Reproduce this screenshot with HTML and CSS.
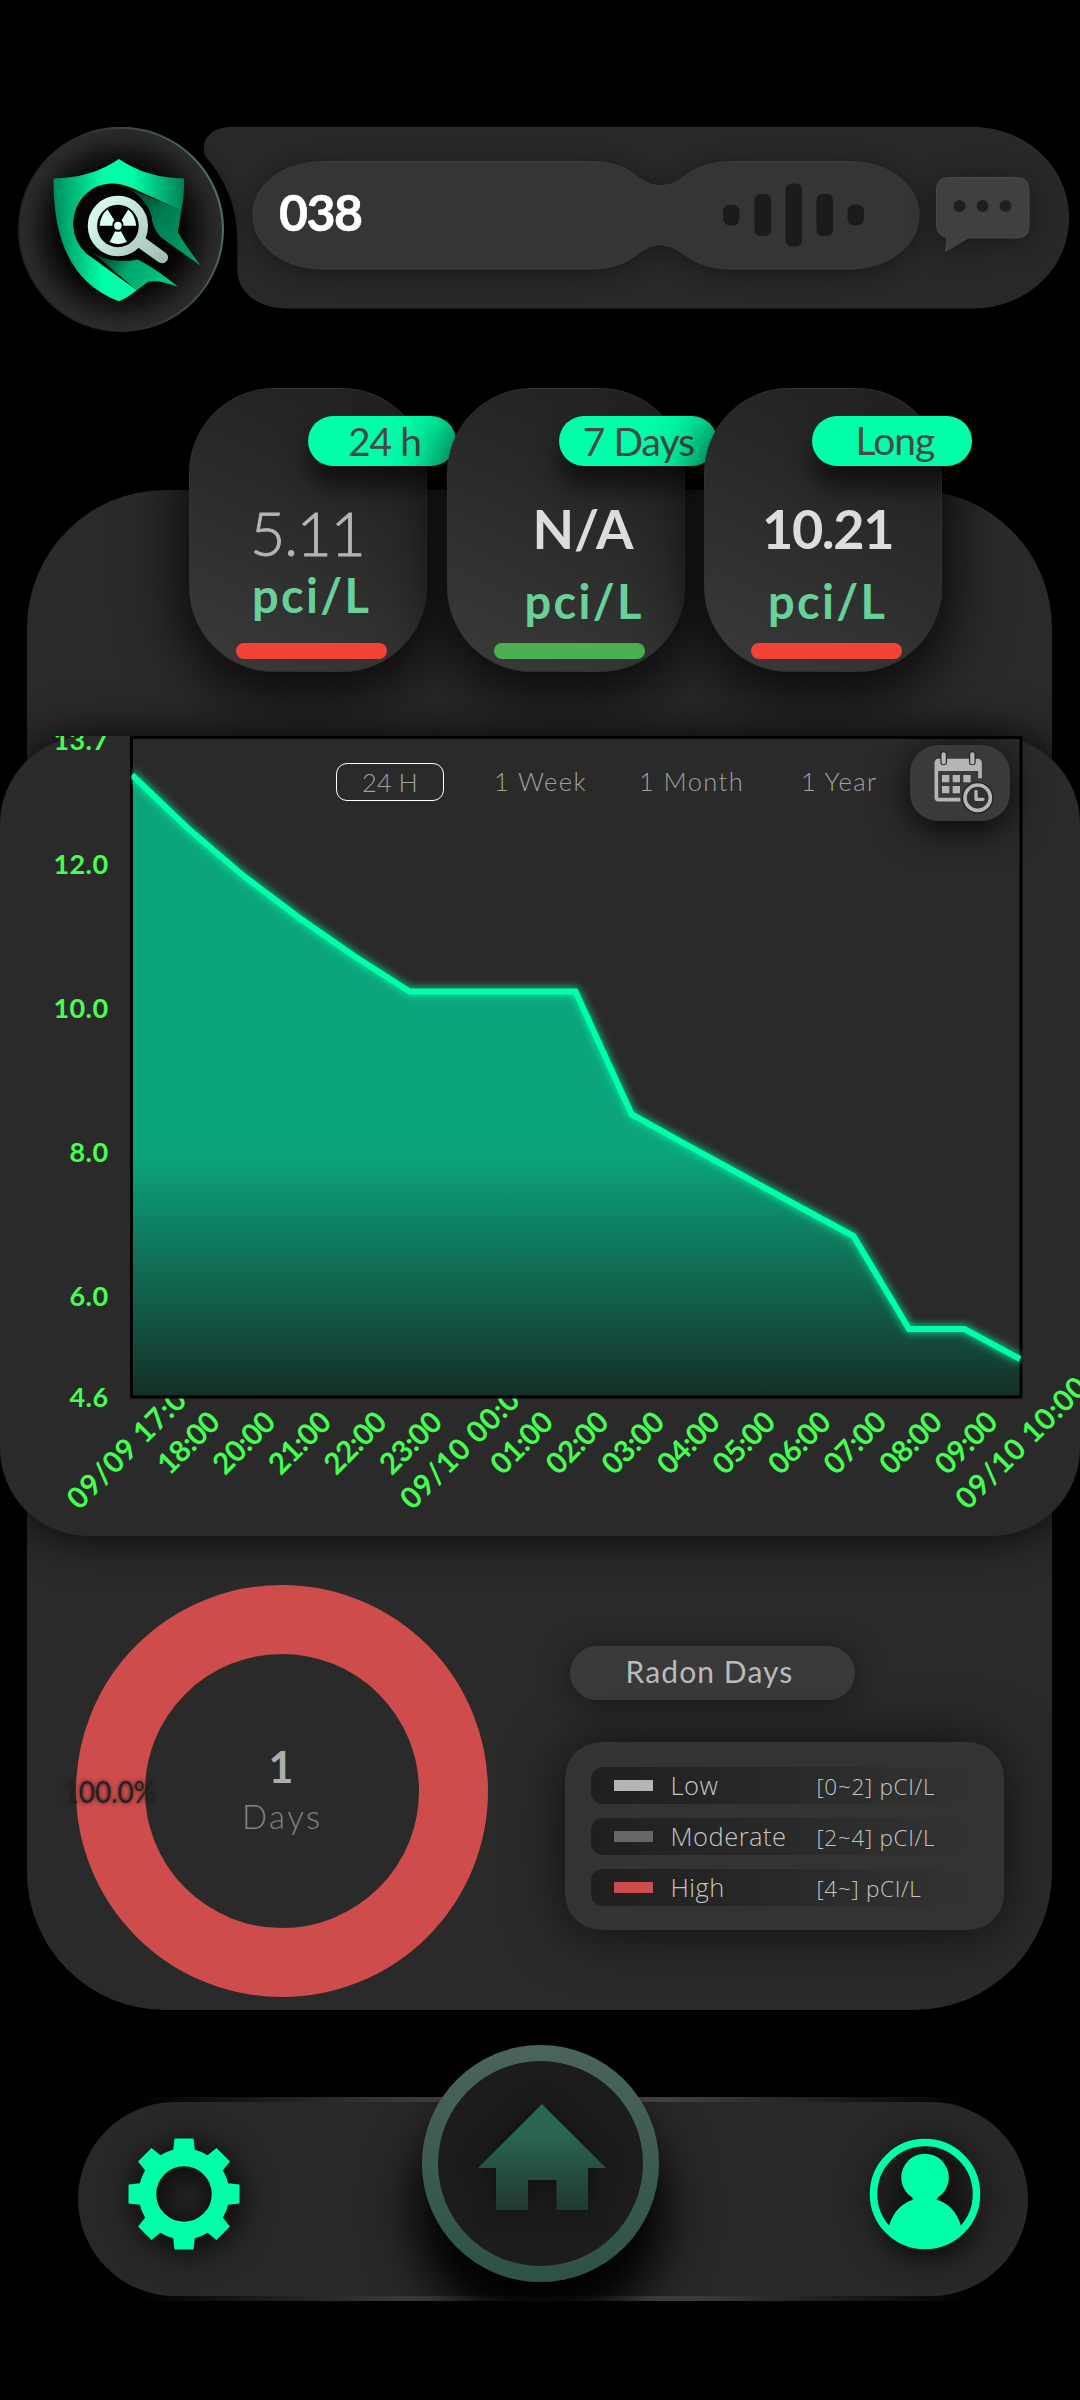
FILE: index.html
```html
<!DOCTYPE html>
<html lang="en">
<head>
<meta charset="utf-8">
<title>Radon monitor</title>
<link rel="stylesheet" href="styles.css">
</head>
<body>
<main class="screen">

  <header class="header">
    <div class="logo">
      <svg viewBox="52 52 598 613" preserveAspectRatio="none">
        <defs>
          <radialGradient id="disc"><stop offset="0" stop-color="#000"/><stop offset=".6" stop-color="#060606"/><stop offset=".78" stop-color="#191919"/><stop offset=".9" stop-color="#262626"/><stop offset="1" stop-color="#2b2b2b"/></radialGradient>
          <linearGradient id="rim" x1="0" y1=".6" x2="1" y2=".3"><stop offset="0" stop-color="#222"/><stop offset=".45" stop-color="#2a2e2c"/><stop offset="1" stop-color="#54706a"/></linearGradient>
          <linearGradient id="band" gradientUnits="userSpaceOnUse" x1="155" y1="0" x2="534" y2="0"><stop offset="0" stop-color="#008a5c"/><stop offset=".38" stop-color="#00ffaa"/><stop offset=".6" stop-color="#00ffaa"/><stop offset="1" stop-color="#008055"/></linearGradient>
          <linearGradient id="tailA" x1="0" y1="0" x2=".8" y2="1"><stop offset="0" stop-color="#003d29"/><stop offset=".4" stop-color="#007a50"/><stop offset="1" stop-color="#00a06c"/></linearGradient>
          <linearGradient id="tailB" x1="0" y1="0" x2="1" y2=".3"><stop offset="0" stop-color="#000"/><stop offset=".55" stop-color="#00a56f"/><stop offset="1" stop-color="#00c887"/></linearGradient>
          <linearGradient id="glass" gradientUnits="userSpaceOnUse" x1="270" y1="270" x2="480" y2="450"><stop offset="0" stop-color="#dcfff4"/><stop offset="1" stop-color="#9fbdb3"/></linearGradient>
        </defs>
        <ellipse cx="351" cy="358" rx="296" ry="304" fill="url(#disc)" stroke="url(#rim)" stroke-width="6"/>
        <path fill="url(#tailA)" d="M375 238 L526 300 Q523 330 516 365 Q535 402 582 466 Q522 424 466 381 Q440 350 440 318 Q425 268 375 238Z"/>
        <path fill="url(#tailB)" d="M250 412 Q308 466 400 448 Q460 480 516 530 Q462 508 430 515 L397 540Z"/>
        <path fill="url(#band)" d="M155 206 Q265 205 345 148 Q425 205 534 206 Q536 256 526 302 L385 235 Q328 208 276 232 Q214 268 212 342 Q214 396 250 430 L397 540 Q370 562 345 573 Q152 500 155 206Z"/>
        <path d="M400 390L470 442" stroke="url(#glass)" stroke-width="35" stroke-linecap="round"/>
        <ellipse cx="342" cy="348" rx="74" ry="77" fill="#030303" stroke="url(#glass)" stroke-width="27"/>
        <g fill="#dcfff4">
          <ellipse cx="342" cy="347" rx="11" ry="12"/>
          <path d="M326 347H289Q292 315 312 299L331 330Q326 337 326 347Z"/>
          <path d="M358 347H395Q392 315 372 299L353 330Q358 337 358 347Z"/>
          <path d="M334 364L318 396Q342 408 368 396L351 364Q342 367 334 364Z"/>
        </g>
      </svg>
    </div>
    <div class="device">
      <svg class="device-shape" viewBox="203 127 867 182">
        <defs>
          <filter id="soft" x="-10%" y="-30%" width="120%" height="170%"><feDropShadow dx="0" dy="4" stdDeviation="14" flood-color="#000" flood-opacity=".4"/></filter>
          <clipPath id="bar"><path d="M232 127H972C1026 127 1069 167 1069 218C1069 269 1026 308.500 972 308.500H289C256 308.500 238 291 238 270V242C238 200 220 172 206 157C199 140 212 127 232 127Z"/></clipPath>
        </defs>
        <path fill="#282828" stroke="#2e2e2e" d="M232 127.500H972C1026 127.500 1068.500 167 1068.500 218C1068.500 269 1026 308 972 308H289C256 308 238 291 238 270V242C238 200 220 172 206 157C199 140 212 127.500 232 127.500Z"/>
        <g clip-path="url(#bar)"><path filter="url(#soft)" fill="#353535" stroke="#3a3a3a" d="M325 161.500H590C614 161.500 628 168 640 179Q660.500 193 681 179C693 168 709 161.500 733 161.500H848C888 161.500 919 184 919 215C919 246 888 269 848 269H733C709 269 693 262 681 252Q660.500 237 640 252C628 262 614 269 590 269H325C283 269 253 246 253 215C253 184 283 161.500 325 161.500Z"/></g>
      </svg>
      <span class="device-id">038</span>
      <svg class="wave" width="142" height="64" viewBox="0 0 142 64" fill="#1b1b1b">
        <rect x="0" y="21.500" width="16.500" height="21" rx="7"/><rect x="31.500" y="11" width="16.500" height="42" rx="6"/><rect x="62.500" y=".5" width="16.500" height="63" rx="6"/><rect x="93.500" y="11" width="16.500" height="42" rx="6"/><rect x="124.500" y="21.500" width="16.500" height="21" rx="7"/>
      </svg>
      <svg class="chat" width="94" height="76" viewBox="0 0 94 76">
        <path fill="#404040" stroke="#484848" d="M13 .5H81Q93 .5 93 13V49Q93 61 81 61H32L9.500 74.500L11 61Q.5 58 .5 49V13Q.5 .5 13 .5Z"/>
        <g fill="#1f1f1f"><circle cx="23.500" cy="29" r="6"/><circle cx="46.500" cy="29" r="6"/><circle cx="69.500" cy="29" r="6"/></g>
      </svg>
    </div>
  </header>

  <section class="panel">
    <div class="tiles">
      <article class="tile tile-day">
        <span class="badge">24 h</span>
        <span class="value">5.11</span>
        <span class="unit">pci/L</span>
        <span class="level level-high"></span>
      </article>
      <article class="tile tile-week">
        <span class="badge">7 Days</span>
        <span class="value">N/A</span>
        <span class="unit">pci/L</span>
        <span class="level level-ok"></span>
      </article>
      <article class="tile tile-long">
        <span class="badge">Long</span>
        <span class="value">10.21</span>
        <span class="unit">pci/L</span>
        <span class="level level-high"></span>
      </article>
    </div>

    <section class="chart">
      <svg class="plot" viewBox="0 736 1080 800">
        <defs>
          <linearGradient id="area" gradientUnits="userSpaceOnUse" x1="0" y1="775" x2="0" y2="1396"><stop offset="0" stop-color="#0ba47b"/><stop offset=".61" stop-color="#0ba47b"/><stop offset="1" stop-color="#152f28"/></linearGradient>
          <filter id="glow" x="-5%" y="-5%" width="110%" height="110%"><feGaussianBlur stdDeviation="4"/></filter>
          <clipPath id="inside"><rect x="131.500" y="737" width="891" height="660"/></clipPath>
        </defs>
        <g class="axis-x">
          <text transform="translate(132 1442) rotate(-45)" textLength="172">09/09 17:00</text>
          <text transform="translate(187.600 1442) rotate(-45)" textLength="74">18:00</text>
          <text transform="translate(243.100 1442) rotate(-45)" textLength="74">20:00</text>
          <text transform="translate(298.700 1442) rotate(-45)" textLength="74">21:00</text>
          <text transform="translate(354.200 1442) rotate(-45)" textLength="74">22:00</text>
          <text transform="translate(409.800 1442) rotate(-45)" textLength="74">23:00</text>
          <text transform="translate(465.300 1442) rotate(-45)" textLength="172">09/10 00:00</text>
          <text transform="translate(520.900 1442) rotate(-45)" textLength="74">01:00</text>
          <text transform="translate(576.400 1442) rotate(-45)" textLength="74">02:00</text>
          <text transform="translate(632 1442) rotate(-45)" textLength="74">03:00</text>
          <text transform="translate(687.500 1442) rotate(-45)" textLength="74">04:00</text>
          <text transform="translate(743 1442) rotate(-45)" textLength="74">05:00</text>
          <text transform="translate(798.600 1442) rotate(-45)" textLength="74">06:00</text>
          <text transform="translate(854 1442) rotate(-45)" textLength="74">07:00</text>
          <text transform="translate(909.700 1442) rotate(-45)" textLength="74">08:00</text>
          <text transform="translate(965.200 1442) rotate(-45)" textLength="74">09:00</text>
          <text transform="translate(1020.500 1442) rotate(-45)" textLength="172">09/10 10:00</text>
        </g>
        <rect x="131.500" y="737.500" width="889.500" height="659.500" fill="#2a2a2a"/>
        <path fill="url(#area)" d="M133 776L187.500 828L243 875.500L298.700 917.500L354 956L409.500 991.500H575.500L631.500 1114L687 1145L742.500 1175.500L798 1206L853.500 1236L909 1329H964.500L1020 1359V1397H133Z"/>
        <rect x="131.500" y="737.500" width="889.500" height="659.500" fill="none" stroke="#000" stroke-width="3"/>
        <g fill="none" stroke="#00ffaa" stroke-width="6" clip-path="url(#inside)">
          <path filter="url(#glow)" d="M131 774L187.500 828L243 875.500L298.700 917.500L354 956L409.500 991.500H575.500L631.500 1114L687 1145L742.500 1175.500L798 1206L853.500 1236L909 1329H964.500L1020 1359"/>
          <path d="M132 775L187.500 828L243 875.500L298.700 917.500L354 956L409.500 991.500H575.500L631.500 1114L687 1145L742.500 1175.500L798 1206L853.500 1236L909 1329H964.500L1020 1359"/>
        </g>
        <g class="axis-y">
          <text x="108.500" y="750">13.7</text>
          <text x="108.500" y="873.500">12.0</text>
          <text x="108.500" y="1017.500">10.0</text>
          <text x="108.500" y="1161.500">8.0</text>
          <text x="108.500" y="1305.500">6.0</text>
          <text x="108.500" y="1406.500">4.6</text>
        </g>
      </svg>
      <nav class="ranges">
        <span class="range range-active">24 H</span>
        <span class="range">1 Week</span>
        <span class="range">1 Month</span>
        <span class="range">1 Year</span>
        <span class="calendar">
          <svg width="100" height="76" viewBox="630 75 300 228">
            <g fill="none" stroke="#b5b5b5" stroke-width="11" stroke-linecap="butt">
              <path d="M840 175V130Q840 122 832 122H717Q709 122 709 130V232Q709 239 716 239H781"/>
            </g>
            <path fill="#b5b5b5" d="M709 117H840V153H709Z"/>
            <path stroke="#222" stroke-width="20" stroke-linecap="round" d="M731 104V126M817 104V126"/>
            <path stroke="#b5b5b5" stroke-width="13" stroke-linecap="round" d="M731 103V127M817 103V127"/>
            <path fill="#b5b5b5" d="M726 165h22v22h-22zM758 165h22v22h-22zM790 165h22v22h-22zM726 198h22v22h-22zM758 198h22v22h-22z"/>
            <circle cx="833" cy="233" r="48" fill="#252525"/>
            <circle cx="833" cy="233" r="38" fill="#303030" stroke="#b5b5b5" stroke-width="11"/>
            <path fill="none" stroke="#b5b5b5" stroke-width="10" stroke-linecap="round" stroke-linejoin="round" d="M828 214V238H849"/>
          </svg>
        </span>
      </nav>
    </section>

    <section class="summary">
      <svg class="donut" width="412" height="412" viewBox="0 0 412 412">
        <circle cx="206" cy="206" r="171.500" fill="none" stroke="#cf4c4c" stroke-width="69"/>
        <text class="donut-share" x="-13" y="217.500" textLength="93" lengthAdjust="spacingAndGlyphs">100.0%</text>
        <text class="donut-count" x="205" y="198">1</text>
        <text class="donut-unit" x="166" y="244" textLength="78">Days</text>
      </svg>
      <div class="details">
        <span class="details-title">Radon Days</span>
        <ul class="legend">
          <li class="legend-row"><i class="swatch swatch-low"></i><span class="legend-name">Low</span><span class="legend-range">[0~2] pCI/L</span></li>
          <li class="legend-row"><i class="swatch swatch-moderate"></i><span class="legend-name">Moderate</span><span class="legend-range">[2~4] pCI/L</span></li>
          <li class="legend-row"><i class="swatch swatch-high"></i><span class="legend-name">High</span><span class="legend-range">[4~] pCI/L</span></li>
        </ul>
      </div>
    </section>
  </section>

  <footer class="dock">
    <div class="dock-bar">
      <svg class="dock-icon" width="112" height="112" viewBox="-56 -56 112 112" fill="#00ffaa">
        <defs><path id="tooth" d="M-11 -42L-9.500 -55.500H9.500L11 -42Z"/></defs>
        <circle r="36.500" fill="none" stroke="#00ffaa" stroke-width="17.500"/>
        <use href="#tooth"/><use href="#tooth" transform="rotate(45)"/><use href="#tooth" transform="rotate(90)"/><use href="#tooth" transform="rotate(135)"/><use href="#tooth" transform="rotate(180)"/><use href="#tooth" transform="rotate(225)"/><use href="#tooth" transform="rotate(270)"/><use href="#tooth" transform="rotate(315)"/>
      </svg>
      <svg class="dock-icon" width="112" height="112" viewBox="-56 -56 112 112" fill="#00ffaa">
        <circle r="51.500" fill="none" stroke="#00ffaa" stroke-width="7.500"/>
        <circle cy="-16.500" r="23.800"/>
        <path d="M-36 32Q-30 11 -11 5.500Q-14 5 -11 1H11Q14 5 11 5.500Q30 11 36 32L35 36A50 50 0 0 1 -35 36Z"/>
      </svg>
    </div>
    <div class="home">
      <svg width="130" height="108" viewBox="477 2101 130 108">
        <defs><linearGradient id="house" x1="0" y1="0" x2="0" y2="1"><stop offset="0" stop-color="#2a6655"/><stop offset=".3" stop-color="#2a6352"/><stop offset="1" stop-color="#203831"/></linearGradient></defs>
        <path fill="url(#house)" d="M542 2102L606 2166H588V2208H556.500V2178H528V2208H496V2166H478Z"/>
      </svg>
    </div>
  </footer>
</main>
</body>
</html>
```
FILE: styles.css
```css
* { box-sizing: border-box; }
body { margin: 0; background: #000; font-family: Lato, "Liberation Sans", sans-serif; }
svg { display: block; }
.screen { position: relative; z-index: 0; width: 1080px; height: 2400px; overflow: hidden; background: #000; }

/* Header */
.header { display: flex; height: 208px; margin-top: 127px; padding-left: 18px; }
.logo { flex: none; width: 206px; height: 205px; border-radius: 50%; box-shadow: 6px 4px 14px 2px rgba(0, 0, 0, .6); }
.logo svg { width: 206px; height: 205px; }
.device { position: relative; flex: none; width: 867px; height: 182px; margin-left: -21px; display: flex; align-items: center; padding-left: 76px; }
.device-shape { position: absolute; left: 0; top: 0; width: 867px; height: 182px; z-index: -1; }
.device-id { width: 444px; font-size: 50px; font-weight: 700; line-height: 60px; letter-spacing: -1.5px; color: #fff; padding-bottom: 12px; -webkit-text-stroke: .6px #fff; }
.wave { margin: -7px 0 0 0; }
.chat { margin: -7px 0 0 71px; filter: drop-shadow(0 4px 14px rgba(0, 0, 0, .4)); }

/* Panel */
.panel { width: 1025px; height: 1520px; margin: 155px 0 0 27px; border-radius: 138px; background: #2a2a2a; display: flex; flex-direction: column; }

/* Reading tiles */
.tiles { display: flex; gap: 19.5px; height: 284px; margin: -102px 0 0 162px; }
.tile { position: relative; flex: none; width: 238px; height: 284px; padding-top: 108px; border: 1px solid #303030; border-radius: 85px; background: linear-gradient(205deg, #202020 5%, #2a2a2a 45%, #393939 95%); box-shadow: 0 14px 60px 6px rgba(0, 0, 0, .85); display: flex; flex-direction: column; }
.badge { position: absolute; top: 27px; right: -30px; width: 148px; height: 50px; border-radius: 25px; background: #00ffaa; box-shadow: 0 20px 26px rgba(0, 0, 0, .6); color: #434a47; font-size: 39px; line-height: 51px; text-align: center; white-space: nowrap; letter-spacing: -1px; padding-left: 5px; }
.value { height: 62px; font-size: 54px; font-weight: 700; line-height: 63px; color: #ddd; white-space: nowrap; }
.unit { height: 60px; margin-top: 12px; font-size: 47px; font-weight: 700; line-height: 60px; color: #68d099; white-space: nowrap; letter-spacing: 2.3px; }
.level { width: 151px; height: 16px; margin: 12px 0 0 46px; border-radius: 8px; }
.level-high { background: #f44336; }
.level-ok { background: #4caf50; }
.tile-day .value { margin: 6px 0 0 60px; font-size: 61px; font-weight: 300; line-height: 60px; color: #b5b5b5; letter-spacing: -1.5px; -webkit-text-stroke: .8px #b5b5b5; }
.tile-day .unit { margin: 0 0 0 62px; }
.tile-day .level { margin-top: 18px; }
.tile-week .value { margin-left: 85px; }
.tile-week .unit { margin-left: 77px; }
.tile-week .badge { right: -33px; width: 158px; padding-left: 2px; }
.tile-long .value { margin-left: 57px; letter-spacing: -1.4px; }
.tile-long .unit { margin-left: 63px; }
.tile-long .badge { right: -31px; width: 160px; line-height: 48px; padding-left: 6px; }

/* Chart */
.chart { position: relative; display: grid; width: 1080px; height: 800px; margin: 64px 0 0 -27px; border-radius: 88px; background: #2a2a2a; box-shadow: 0 0 46px rgba(0, 0, 0, .85); }
.plot, .ranges { grid-area: 1 / 1; }
.plot { width: 1080px; height: 800px; overflow: hidden; }
.axis-x text { text-anchor: middle; dominant-baseline: central; font-size: 29.5px; font-weight: 700; fill: #44ff50; }
.axis-y text { text-anchor: end; font-size: 27px; font-weight: 700; fill: #44ff50; letter-spacing: .4px; }
.ranges { position: relative; display: flex; align-self: start; height: 80px; padding: 9px 0 0 336px; }
.range { height: 38px; margin: 18px 0 0; font-size: 25.5px; font-weight: 300; line-height: 36px; color: #a0a0a0; white-space: nowrap; letter-spacing: 1.4px; width: 145px; }
.range-active { width: 108px; height: 38px; margin-right: 50px; border: 1.5px solid #fff; border-radius: 11px; text-align: center; line-height: 37px; letter-spacing: 0; }
.range:nth-child(3) { width: 162px; }
.range:nth-child(4) { width: 109px; }
.calendar { width: 100px; height: 76px; border-radius: 28px; background: #3a3a3a; box-shadow: 0 8px 36px rgba(0, 0, 0, .85); }

/* Summary */
.summary { display: flex; height: 474px; padding-left: 49px; }
.donut { flex: none; margin-top: 49px; overflow: visible; }
.donut-share { font-size: 30px; fill: #222; filter: drop-shadow(0 0 2px #1a1a1a); }
.donut-count { font-size: 43px; font-weight: 700; fill: #adadad; text-anchor: middle; }
.donut-unit { font-size: 33px; font-weight: 300; fill: #808080; }
.details { display: flex; flex-direction: column; padding: 110px 0 0 77px; }
.details-title { width: 285px; height: 54px; margin-left: 4.5px; border-radius: 27px; background: #3a3a3a; box-shadow: 0 3px 30px rgba(0, 0, 0, .4); font-size: 30px; line-height: 51px; text-align: center; color: #bbb; letter-spacing: 1.1px; padding-right: 5px; }
.legend { list-style: none; width: 439px; height: 188px; margin: 42px 0 0; padding: 25px 17px 0 26px; border-radius: 36px; background: #333; box-shadow: 0 2px 56px rgba(0, 0, 0, .65); display: flex; flex-direction: column; gap: 14px; }
.legend-row { display: flex; align-items: center; height: 37px; padding-left: 23px; border-radius: 12px; background: linear-gradient(90deg, #1f1f1f, #333 97%); font-family: "Open Sans", "Noto Sans", sans-serif; font-weight: 300; color: #c4c4c4; }
.swatch { width: 39px; height: 11px; margin: 0 17.5px 0 0; }
.swatch-low { background: #b5b5b5; }
.swatch-moderate { background: #666; }
.swatch-high { background: #cf4c4c; }
.legend-name { width: 146px; font-size: 25.5px; line-height: 37px; letter-spacing: .5px; }
.legend-range { font-size: 22.5px; line-height: 37px; padding-top: 2px; white-space: nowrap; letter-spacing: .7px; }

/* Dock */
.dock { display: grid; width: 950px; height: 256px; margin: 35px 0 0 78px; }
.dock-bar, .home { grid-area: 1 / 1; }
.dock-bar { position: relative; display: flex; justify-content: space-between; height: 194px; margin-top: 57px; padding: 36px 47.5px 0 50px; border-radius: 97px; background: #282828; }
.dock-bar::before { content: ""; position: absolute; z-index: -1; left: 60px; right: 60px; top: -5px; bottom: -5px; background: linear-gradient(90deg, #000, #484848 40%, #484848 60%, #000); }
.dock-icon { filter: drop-shadow(3px 4px 16px #000); }
.home { position: relative; display: flex; justify-content: center; align-items: center; justify-self: center; width: 237px; height: 237px; margin-left: -26px; border-radius: 50%; border: 16.5px solid transparent; background: linear-gradient(#1c1c1c, #1c1c1c) padding-box, linear-gradient(#4b645d, #2d5245) border-box; box-shadow: 0 46px 50px 6px #000; }
.home svg { margin: -14px 0 0 4px; filter: drop-shadow(0 0 12px rgba(0, 0, 0, .5)); }
```
